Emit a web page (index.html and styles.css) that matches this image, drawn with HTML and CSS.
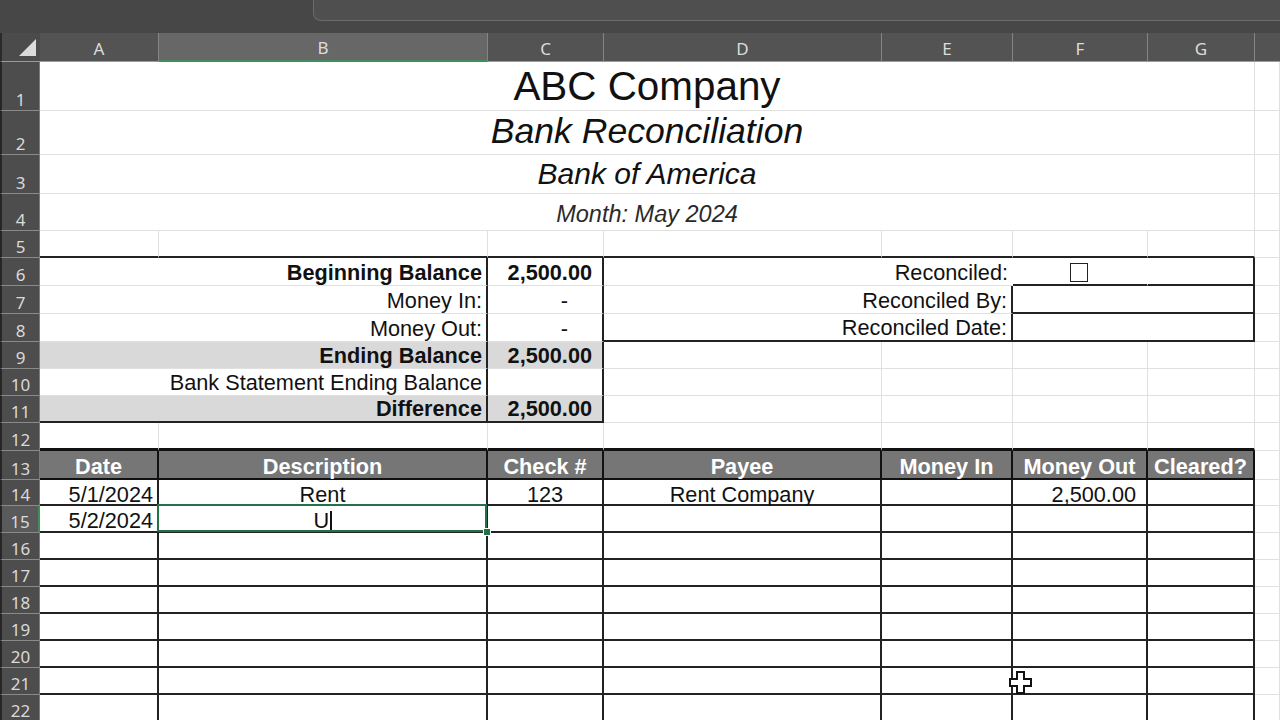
FILE: index.html
```html
<!DOCTYPE html>
<html>
<head>
<meta charset="utf-8">
<link rel="stylesheet" href="styles.css">
</head>
<body>
<div class="app">
  <div class="topbar"><div class="tb-left"></div><div class="tb-box"></div></div>
  <div class="sheet">
    <!-- column headers -->
    <div class="corner"><svg width="40" height="29" viewBox="0 0 40 29"><polygon points="36,6 36,23 19,23" fill="#dadada"/></svg></div>
    <div class="ch">A</div><div class="ch sel">B</div><div class="ch">C</div><div class="ch">D</div><div class="ch">E</div><div class="ch">F</div><div class="ch">G</div><div class="ch last"></div>

    <!-- row 1-4 titles -->
    <div class="rh">1</div><div class="c s7 ctr title t1">ABC Company</div><div class="c"></div>
    <div class="rh">2</div><div class="c s7 ctr title t2">Bank Reconciliation</div><div class="c"></div>
    <div class="rh">3</div><div class="c s7 ctr title t3">Bank of America</div><div class="c"></div>
    <div class="rh">4</div><div class="c s7 ctr title t4">Month: May 2024</div><div class="c"></div>

    <!-- row 5 -->
    <div class="rh">5</div>
    <div class="c bb"></div><div class="c bb"></div><div class="c bb"></div><div class="c bb"></div><div class="c bb"></div><div class="c bb"></div><div class="c bb"></div><div class="c"></div>

    <!-- row 6 -->
    <div class="rh">6</div>
    <div class="c s2 r b br">Beginning Balance</div>
    <div class="c r b br acc">2,500.00</div>
    <div class="c s2 r nr">Reconciled:</div>
    <div class="c ctr mid nr bb"><span class="chk"></span></div>
    <div class="c bb br"></div>
    <div class="c"></div>

    <!-- row 7 -->
    <div class="rh">7</div>
    <div class="c s2 r br">Money In:</div>
    <div class="c r br dash">-</div>
    <div class="c s2 r br">Reconciled By:</div>
    <div class="c s2 bb br"></div>
    <div class="c"></div>

    <!-- row 8 -->
    <div class="rh">8</div>
    <div class="c s2 r br">Money Out:</div>
    <div class="c r br dash">-</div>
    <div class="c s2 r br bb">Reconciled Date:</div>
    <div class="c s2 bb br"></div>
    <div class="c"></div>

    <!-- row 9 -->
    <div class="rh">9</div>
    <div class="c s2 r b br sh">Ending Balance</div>
    <div class="c r b br sh acc">2,500.00</div>
    <div class="c"></div><div class="c"></div><div class="c"></div><div class="c"></div><div class="c"></div>

    <!-- row 10 -->
    <div class="rh">10</div>
    <div class="c s2 r br">Bank Statement Ending Balance</div>
    <div class="c br"></div>
    <div class="c"></div><div class="c"></div><div class="c"></div><div class="c"></div><div class="c"></div>

    <!-- row 11 -->
    <div class="rh">11</div>
    <div class="c s2 r b br sh bb">Difference</div>
    <div class="c r b br sh bb acc">2,500.00</div>
    <div class="c"></div><div class="c"></div><div class="c"></div><div class="c"></div><div class="c"></div>

    <!-- row 12 -->
    <div class="rh">12</div>
    <div class="c tb"></div><div class="c tb"></div><div class="c tb"></div><div class="c tb"></div><div class="c tb"></div><div class="c tb"></div><div class="c tb"></div><div class="c"></div>

    <!-- row 13 header -->
    <div class="rh">13</div>
    <div class="c th">Date</div><div class="c th">Description</div><div class="c th">Check #</div><div class="c th">Payee</div><div class="c th">Money In</div><div class="c th">Money Out</div><div class="c th">Cleared?</div><div class="c"></div>

    <!-- row 14 -->
    <div class="rh">14</div>
    <div class="c t r">5/1/2024</div><div class="c t ctr">Rent</div><div class="c t ctr">123</div><div class="c t ctr">Rent Company</div><div class="c t"></div><div class="c t r acc">2,500.00</div><div class="c t"></div><div class="c"></div>

    <!-- row 15 -->
    <div class="rh rsel">15</div>
    <div class="c t r">5/2/2024</div><div class="c t ctr active"><span>U</span><span class="caret"></span></div><div class="c t"></div><div class="c t"></div><div class="c t"></div><div class="c t"></div><div class="c t"></div><div class="c"></div>

    <div class="rh">16</div>
    <div class="c t"></div><div class="c t"></div><div class="c t"></div><div class="c t"></div><div class="c t"></div><div class="c t"></div><div class="c t"></div><div class="c"></div>
    <div class="rh">17</div>
    <div class="c t"></div><div class="c t"></div><div class="c t"></div><div class="c t"></div><div class="c t"></div><div class="c t"></div><div class="c t"></div><div class="c"></div>
    <div class="rh">18</div>
    <div class="c t"></div><div class="c t"></div><div class="c t"></div><div class="c t"></div><div class="c t"></div><div class="c t"></div><div class="c t"></div><div class="c"></div>
    <div class="rh">19</div>
    <div class="c t"></div><div class="c t"></div><div class="c t"></div><div class="c t"></div><div class="c t"></div><div class="c t"></div><div class="c t"></div><div class="c"></div>
    <div class="rh">20</div>
    <div class="c t"></div><div class="c t"></div><div class="c t"></div><div class="c t"></div><div class="c t"></div><div class="c t"></div><div class="c t"></div><div class="c"></div>
    <div class="rh">21</div>
    <div class="c t"></div><div class="c t"></div><div class="c t"></div><div class="c t"></div><div class="c t"></div><div class="c t"></div><div class="c t"></div><div class="c"></div>
    <div class="rh">22</div>
    <div class="c t"></div><div class="c t"></div><div class="c t"></div><div class="c t"></div><div class="c t"></div><div class="c t"></div><div class="c t"></div><div class="c"></div>
  </div>
  <svg class="cursor" width="26" height="26" viewBox="0 0 26 26"><polygon points="9,2 16,2 16,9 23,9 23,16 16,16 16,23 9,23 9,16 2,16 2,9 9,9" fill="#ffffff" stroke="#111" stroke-width="2" stroke-linejoin="miter"/></svg>
</div>
</body>
</html>
```
FILE: styles.css
```css
html, body {
  margin: 0;
  padding: 0;
  background: #ffffff;
  overflow: hidden;
}
.app {
  position: relative;
  width: 1280px;
  height: 720px;
  overflow: hidden;
  font-family: "Liberation Sans", Arial, sans-serif;
}
.topbar {
  height: 33px;
  background: #474747;
  display: flex;
}
.tb-left {
  width: 313px;
  flex: none;
}
.tb-box {
  flex: 1;
  height: 20px;
  background: #4f4f4f;
  border-left: 1px solid #6b6b6b;
  border-bottom: 1px solid #6b6b6b;
  border-bottom-left-radius: 8px;
}
.sheet {
  display: grid;
  grid-template-columns: 40px 119px 329px 116px 278px 131px 135px 107px 1fr;
  grid-template-rows: 29px 49px 44px 39px 37px 27px 28px 28px 28px 27px 27px 27px 28px 29px 26px 27px 27px 27px 27px 27px 27px 27px 27px;
}
.corner {
  background: #4b4b4b;
  border-bottom: 1px solid #9a9a9a;
  border-left: 2px solid #2a2a2a;
  box-sizing: border-box;
}
.corner svg {
  display: block;
  margin-left: -2px;
}
.ch {
  background: #535353;
  color: #dcdcdc;
  font-family: "Noto Sans", "Open Sans", sans-serif;
  font-size: 17px;
  line-height: 1;
  display: flex;
  align-items: center;
  justify-content: center;
  border-right: 1px solid #858585;
  border-bottom: 1px solid #9a9a9a;
  box-sizing: border-box;
  padding-top: 2px;
}
.ch.sel {
  background: #676767;
  border-bottom: 2px solid #3f8f5c;
}
.ch.last {
  border-right: none;
}
.rh {
  background: #4d4d4d;
  color: #dadada;
  font-family: "Noto Sans", "Open Sans", sans-serif;
  font-size: 17px;
  line-height: 1;
  display: flex;
  align-items: flex-end;
  justify-content: center;
  border-left: 2px solid #262626;
  border-right: 1px solid #7c7c7c;
  border-bottom: 1px solid #8a8a8a;
  box-sizing: border-box;
  padding-bottom: 2px;
}
.rh.rsel {
  background: #5a5a5a;
  border-right: 2px solid #3f8f5c;
}
.c {
  box-sizing: border-box;
  border-right: 1px solid #e0e0e0;
  border-bottom: 1px solid #e0e0e0;
  display: flex;
  align-items: flex-end;
  justify-content: flex-start;
  padding: 0 4px 1px 4px;
  font-size: 21.7px;
  line-height: 1;
  color: #111;
  white-space: nowrap;
  min-width: 0;
  background: #ffffff;
}
.s2 { grid-column: span 2; }
.s7 { grid-column: span 7; }
.r { justify-content: flex-end; }
.ctr { justify-content: center; }
.mid { align-items: center; }
.b { font-weight: bold; }
.sh { background: #d9d9d9; }
.br { border-right: 2px solid #222; }
.bb { border-bottom: 2px solid #222; }
.nr { border-right-color: #ffffff; }
.tb { border-bottom: 3px solid #111; }
.acc { padding-right: 10px; }
.dash { padding-right: 34px; }

.title { padding-bottom: 4px; }
.t1 { font-size: 40.4px; }
.t2 { font-size: 35.6px; font-style: italic; }
.t3 { font-size: 30px; font-style: italic; }
.t4 { font-size: 23.5px; font-style: italic; color: #2a2a2a; }

.th {
  background: #767676;
  color: #ffffff;
  font-weight: bold;
  justify-content: center;
  align-items: center;
  border-right: 2px solid #111;
  border-bottom: 2px solid #111;
  padding-bottom: 0;
  padding-top: 4px;
}
.t {
  border-right: 2px solid #222;
  border-bottom: 2px solid #222;
  align-items: center;
  padding-bottom: 0;
  padding-top: 5px;
}
.chk {
  display: block;
  width: 16px;
  height: 17px;
  border: 1.5px solid #222;
  margin-left: -2px;
  margin-top: 3px;
}
.active {
  position: relative;
  overflow: visible;
}
.active::after {
  content: "";
  position: absolute;
  left: -2px;
  top: -2px;
  right: -1px;
  bottom: -1px;
  border: 2px solid #217346;
}
.active::before {
  content: "";
  position: absolute;
  right: -5px;
  bottom: -5px;
  width: 6px;
  height: 6px;
  background: #217346;
  border: 1px solid #ffffff;
  z-index: 2;
}
.caret {
  display: inline-block;
  width: 1.5px;
  height: 21px;
  background: #111;
  margin-left: 1px;
}
.cursor {
  position: absolute;
  left: 1008px;
  top: 670px;
}
```
